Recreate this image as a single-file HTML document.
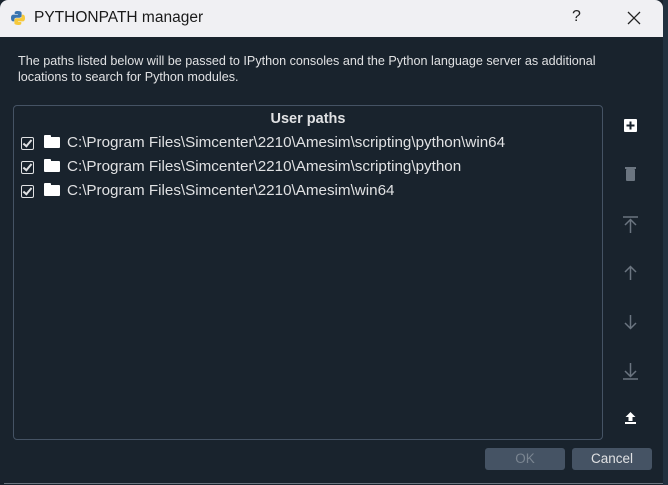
<!DOCTYPE html>
<html><head><style>
html,body{margin:0;padding:0;width:668px;height:485px;overflow:hidden;background:#19232d;font-family:"Liberation Sans",sans-serif}
.title{position:absolute;left:0;top:0;width:663px;height:37px;background:#f0f0f3;border-top-left-radius:8px;border-top-right-radius:8px}
.title .t{position:absolute;left:34px;top:9px;font-size:15.5px;color:#1a1a1a}
.title .q{position:absolute;left:572px;top:8px;font-size:16px;color:#222}
.right{position:absolute;left:663px;top:0;width:5px;height:485px;background:#22313f}
.desc{position:absolute;left:18px;top:53px;font-size:12.6px;line-height:16px;color:#e0e1e3;width:600px}
.box{position:absolute;left:13px;top:105px;width:588px;height:333px;border:1px solid #455364;border-radius:4px}
.hdr{position:absolute;left:0;width:100%;top:5px;text-align:center;font-weight:bold;font-size:14.5px;color:#e0e1e3}
.row{position:absolute;left:7px;height:20px;font-size:15.2px;color:#e0e1e3}
.cb{position:absolute;left:0;top:3px;width:11px;height:11px;border:1px solid #e0e1e3;border-radius:2px}
.cb:after{content:"";position:absolute;left:3px;top:0px;width:3px;height:7px;border:solid #e0e1e3;border-width:0 2px 2px 0;transform:rotate(40deg)}
.fold{position:absolute;left:23px;top:3px;width:16px;height:11px;background:#fff;border-radius:1px}
.fold:before{content:"";position:absolute;left:0;top:-2px;width:7px;height:3px;background:#fff;border-radius:1px 1px 0 0}
.row span{position:absolute;left:46px;top:0;white-space:nowrap}
.btn{position:absolute;top:448px;height:22px;width:80px;border-radius:3px;background:#455364;color:#e0e1e3;font-size:13.5px;text-align:center;line-height:22px}
</style></head><body>
<div class="right"></div>
<div class="title">
<svg style="position:absolute;left:10px;top:10px" width="16" height="16" viewBox="0 0 16 16"><path d="M7.8 1C4.5 1 4.7 2.4 4.7 2.4V4h3.2v.6H3.4S1 4.3 1 7.9s2 3.5 2 3.5h1.3V9.7s-.1-2 2-2h3.3s2 0 2-1.9V2.9S11.8 1 7.8 1z" fill="#3a75b0"/><path d="M8.2 15c3.3 0 3.1-1.4 3.1-1.4V12H8.1v-.6h4.5S15 11.7 15 8.1s-2-3.5-2-3.5h-1.3v1.7s.1 2-2 2H6.4s-2 0-2 1.9v3.1S4.2 15 8.2 15z" fill="#f6c93b"/></svg>
<div class="t">PYTHONPATH manager</div>
<div class="q">?</div>
<svg style="position:absolute;left:627px;top:11px" width="14" height="14" viewBox="0 0 14 14"><path d="M1 1L13 13M13 1L1 13" stroke="#222" stroke-width="1.3"/></svg>
</div>
<div class="desc">The paths listed below will be passed to IPython consoles and the Python language server as additional locations to search for Python modules.</div>
<div class="box">
<div class="hdr">User paths</div>
<div class="row" style="top:28px"><div class="cb"></div><div class="fold"></div><span>C:\Program Files\Simcenter\2210\Amesim\scripting\python\win64</span></div>
<div class="row" style="top:52px"><div class="cb"></div><div class="fold"></div><span>C:\Program Files\Simcenter\2210\Amesim\scripting\python</span></div>
<div class="row" style="top:76px"><div class="cb"></div><div class="fold"></div><span>C:\Program Files\Simcenter\2210\Amesim\win64</span></div>
</div>
<svg style="position:absolute;left:620px;top:115px" width="22" height="320" viewBox="0 0 22 320">
<rect x="4" y="4" width="13" height="13" rx="1" fill="#fff"/><path d="M10.5 6.5v8M6.5 10.5h8" stroke="#19232d" stroke-width="2"/>
<rect x="6" y="54" width="9" height="12" rx="1" fill="#6b7580"/><rect x="5" y="52" width="11" height="2" fill="#6b7580"/>
<path d="M3 102h15M10.5 118v-13M5 110l5.5-5.5L16 110" stroke="#6b7580" stroke-width="1.5" fill="none"/>
<path d="M10.5 165v-13M5 157l5.5-5.5L16 157" stroke="#6b7580" stroke-width="1.5" fill="none"/>
<path d="M10.5 200v13M5 208l5.5 5.5L16 208" stroke="#6b7580" stroke-width="1.5" fill="none"/>
<path d="M3 264h15M10.5 248v14M5 256l5.5 5.5L16 256" stroke="#6b7580" stroke-width="1.5" fill="none"/>
<path d="M10.5 297l5 5h-3v4h-4v-4h-3z" fill="#fff"/><rect x="5" y="307" width="11" height="2" fill="#fff"/>
</svg>
<div class="btn" style="left:485px;color:#7a8591">OK</div>
<div class="btn" style="left:572px">Cancel</div>
<div style="position:absolute;left:4px;top:483px;width:659px;height:1px;background:#6b7580"></div>
</body></html>
